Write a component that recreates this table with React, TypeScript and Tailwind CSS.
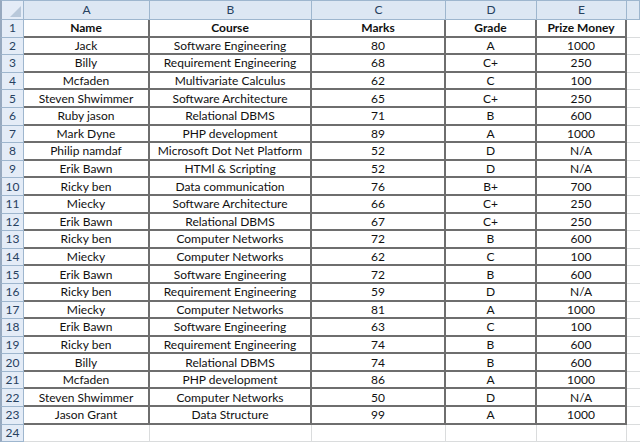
import React from 'react';

const cols = ['A', 'B', 'C', 'D', 'E'];

const rows: string[][] = [
  ['Name', 'Course', 'Marks', 'Grade', 'Prize Money'],
  ['Jack', 'Software Engineering', '80', 'A', '1000'],
  ['Billy', 'Requirement Engineering', '68', 'C+', '250'],
  ['Mcfaden', 'Multivariate Calculus', '62', 'C', '100'],
  ['Steven Shwimmer', 'Software Architecture', '65', 'C+', '250'],
  ['Ruby jason', 'Relational DBMS', '71', 'B', '600'],
  ['Mark Dyne', 'PHP development', '89', 'A', '1000'],
  ['Philip namdaf', 'Microsoft Dot Net Platform', '52', 'D', 'N/A'],
  ['Erik Bawn', 'HTMl & Scripting', '52', 'D', 'N/A'],
  ['Ricky ben', 'Data communication', '76', 'B+', '700'],
  ['Miecky', 'Software Architecture', '66', 'C+', '250'],
  ['Erik Bawn', 'Relational DBMS', '67', 'C+', '250'],
  ['Ricky ben', 'Computer Networks', '72', 'B', '600'],
  ['Miecky', 'Computer Networks', '62', 'C', '100'],
  ['Erik Bawn', 'Software Engineering', '72', 'B', '600'],
  ['Ricky ben', 'Requirement Engineering', '59', 'D', 'N/A'],
  ['Miecky', 'Computer Networks', '81', 'A', '1000'],
  ['Erik Bawn', 'Software Engineering', '63', 'C', '100'],
  ['Ricky ben', 'Requirement Engineering', '74', 'B', '600'],
  ['Billy', 'Relational DBMS', '74', 'B', '600'],
  ['Mcfaden', 'PHP development', '86', 'A', '1000'],
  ['Steven Shwimmer', 'Computer Networks', '50', 'D', 'N/A'],
  ['Jason Grant', 'Data Structure', '99', 'A', '1000'],
  ['', '', '', '', ''],
];

export default function App() {
  return (
    <div
      className="w-[640px] h-[442px] overflow-hidden bg-white text-[12px] text-[#111]"
      style={{ fontFamily: 'Lato, "Open Sans", sans-serif' }}
    >
      <div className="grid grid-cols-[24px_126px_162px_134px_91px_90px_13px] grid-rows-[20px_repeat(24,17.6px)]">
        {/* column header row */}
        <div className="relative border-l-2 border-t border-r border-b border-l-[#97a9bf] border-[#9eb6ce] bg-[#e4ecf7]">
          <svg className="absolute right-[2px] bottom-[2px]" width="11" height="11" viewBox="0 0 11 11">
            <polygon points="11,0 11,11 0,11" fill="#b8c8da" />
          </svg>
        </div>
        {[...cols, ''].map((c, i) => (
          <div
            key={'h' + i}
            className="flex items-center justify-center border-t border-r border-b border-[#9eb6ce] bg-[#dde7f3] text-[#27415f]"
          >
            {c}
          </div>
        ))}

        {rows.map((r, ri) => {
          const inTable = ri < 23;
          return (
            <React.Fragment key={ri}>
              <div className="flex items-center justify-center border-l-2 border-r border-b border-l-[#97a9bf] border-[#9eb6ce] bg-[#e4ecf7] text-[#27415f]">
                {ri + 1}
              </div>
              {r.map((v, ci) => (
                <div
                  key={ci}
                  className={
                    inTable
                      ? `flex items-center justify-center pt-[1px] border-r-2 border-b-2 border-[#6e6e6e] whitespace-nowrap ${ri === 0 ? 'font-bold' : ''}`
                      : 'border-r border-b border-[#dadcdd]'
                  }
                >
                  {v}
                </div>
              ))}
              <div className="border-b border-[#dadcdd]" />
            </React.Fragment>
          );
        })}
      </div>
    </div>
  );
}
